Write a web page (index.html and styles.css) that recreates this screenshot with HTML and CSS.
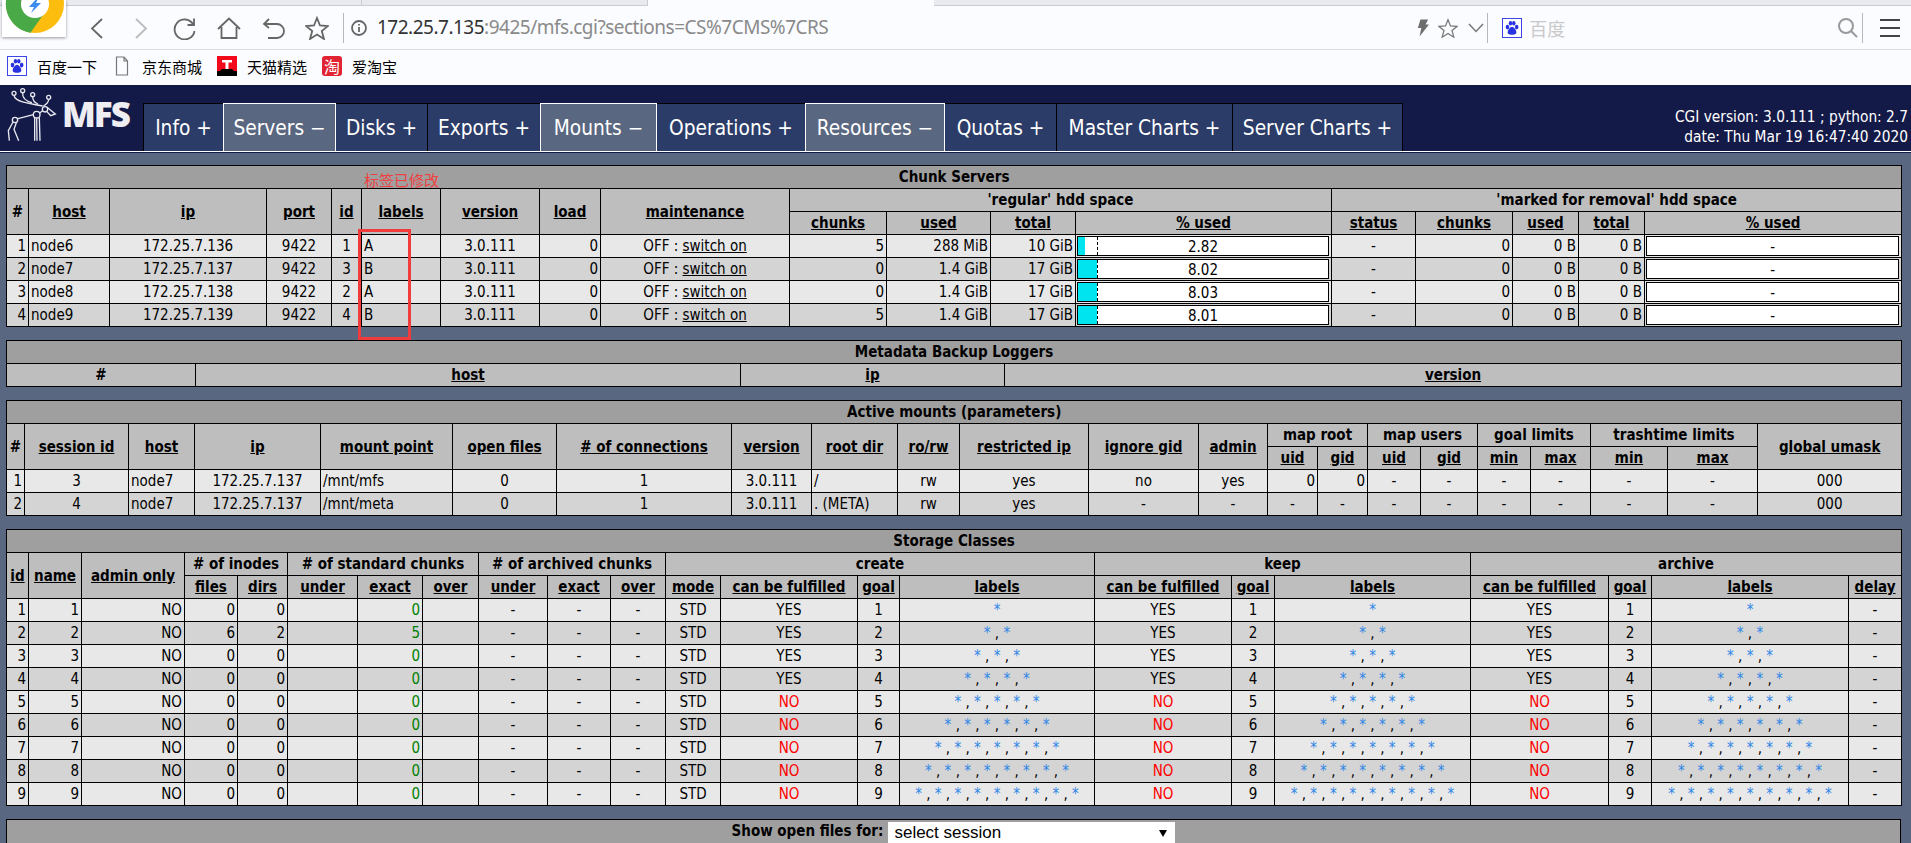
FILE: index.html
```html
<!DOCTYPE html>
<html lang="en">
<head>
<meta charset="utf-8">
<title>MFS</title>
<link rel="stylesheet" href="styles.css">
</head>
<body>
<div class="browser">
  <div class="tabstrip"><div class="tab t-a"></div><div class="tab t-b"></div><div class="tab t-active"></div></div>
  <div class="appicon">
    <svg width="64" height="37" viewBox="0 0 64 37"><circle cx="33" cy="4" r="29" fill="#fdbd0f"/><path d="M33 4 L8 -11 A29 29 0 0 0 28.500 32.700 L41 15 Z" fill="#48a946"/><path d="M14 -6 L33 -4 L24 6 Z" fill="#e53d30"/><circle cx="33" cy="4" r="14" fill="#fff"/><path d="M37 -4 L27 7 L32 7 L29 13 L39 3 L34 3 Z" fill="#3c8bef"/></svg>
  </div>
  <div class="addrbar">
    <div class="navicons">
      <svg class="ic" viewBox="0 0 24 24"><path d="M17 3 L7 12.500 L17 22" class="s"/></svg>
      <svg class="ic" viewBox="0 0 24 24"><path d="M7 3 L17 12.500 L7 22" class="s light"/></svg>
      <svg class="ic" viewBox="0 0 24 24"><path d="M20 8 A10 10 0 1 0 21.500 15 M21 2.500 L21 9 L14.500 9" class="s"/></svg>
      <svg class="ic" viewBox="0 0 24 24"><path d="M1 13 L12 2.500 L23 13 M4.500 11 L4.500 22 L19.500 22 L19.500 11" class="s"/></svg>
      <svg class="ic" viewBox="0 0 24 24"><path d="M8 3 L3 8 L8 12 M3 8 L16 8 A7 7 0 0 1 16 22 L7 22" class="s"/></svg>
      <svg class="ic" viewBox="0 0 24 24"><path d="M12 2 L15 9.500 L23 10 L16.800 15 L19 23 L12 18.500 L5 23 L7.200 15 L1 10 L9 9.500 Z" class="s"/></svg>
    </div>
    <span class="vdiv dv-a"></span>
    <svg class="info" viewBox="0 0 18 18"><circle cx="9" cy="9" r="7" class="s"/><path d="M9 8 L9 13 M9 5 L9 6.500" class="s"/></svg>
    <div class="url"><span class="host-part">172.25.7.135</span>:9425/mfs.cgi?sections=CS%7CMS%7CRS</div>
    <div class="rightgroup">
      <svg class="bolt" viewBox="0 0 14 20"><path d="M4 0 L13 0 L10 6 L14 6 L3 20 L5 10 L1 10 Z" fill="#6e6e6e"/></svg>
      <svg class="star" viewBox="0 0 24 24"><path d="M12 2 L15 9.500 L23 10 L16.800 15 L19 23 L12 18.500 L5 23 L7.200 15 L1 10 L9 9.500 Z" class="s thin"/></svg>
      <svg class="chev" viewBox="0 0 16 10"><path d="M1 1 L8 8.500 L15 1" class="s thin"/></svg>
      <span class="vdiv dv-b"></span>
      <svg class="paw boxed" viewBox="0 0 20 20"><g fill="#2932e1"><ellipse cx="5" cy="9" rx="2" ry="2.600"/><ellipse cx="8.300" cy="4.800" rx="1.900" ry="2.500"/><ellipse cx="12" cy="4.800" rx="1.900" ry="2.500"/><ellipse cx="15.200" cy="9" rx="2" ry="2.600"/><path d="M10 8.500 C7.500 8.500 4 14 5.500 16 C7 18 13 18 14.500 16 C16 14 12.500 8.500 10 8.500 Z"/></g></svg>
      <span class="search-label">百度</span>
      <svg class="mag" viewBox="0 0 20 20"><circle cx="8" cy="8" r="7" class="s lightmag"/><path d="M13 13 L19 19" class="s lightmag"/></svg>
      <span class="vdiv dv-c"></span>
      <div class="burger"><i></i><i></i><i></i></div>
    </div>
  </div>
  <div class="bookmarks">
    <div class="bm"><svg class="bmi boxed" viewBox="0 0 20 20"><g fill="#2932e1"><ellipse cx="5" cy="9" rx="2" ry="2.600"/><ellipse cx="8.300" cy="4.800" rx="1.900" ry="2.500"/><ellipse cx="12" cy="4.800" rx="1.900" ry="2.500"/><ellipse cx="15.200" cy="9" rx="2" ry="2.600"/><path d="M10 8.500 C7.500 8.500 4 14 5.500 16 C7 18 13 18 14.500 16 C16 14 12.500 8.500 10 8.500 Z"/></g></svg>百度一下</div>
    <div class="bm"><svg class="bmi" viewBox="0 0 20 20"><path d="M4.500 1 L12 1 L15.500 5 L15.500 19 L4.500 19 Z M12 1 L12 5 L15.500 5" fill="none" stroke="#777" stroke-width="1.200"/></svg>京东商城</div>
    <div class="bm"><svg class="bmi" viewBox="0 0 20 20"><rect width="20" height="20" fill="#f20a1c"/><path d="M0 15 L3 15 L5 13 L15 13 L17 15 L20 15 L20 20 L0 20 Z" fill="#000"/><path d="M5 4 L15 4 L15 6.500 L11.500 6.500 L11.500 13 L8.500 13 L8.500 6.500 L5 6.500 Z" fill="#fff"/></svg>天猫精选</div>
    <div class="bm"><span class="taobao">淘</span>爱淘宝</div>
  </div>
</div>

<header class="mfs-head">
  <div class="logo">
    <svg class="moose" viewBox="0 3 180 198">
      <g fill="none" stroke="#e8e8ee" stroke-width="4">
        <circle cx="42" cy="28" r="6"/><circle cx="68" cy="20" r="6"/><circle cx="98" cy="32" r="6"/><circle cx="146" cy="40" r="6"/>
        <path d="M42 34 C44 52 80 58 128 66 M68 26 C66 44 80 52 96 56 M98 38 C98 50 104 56 114 60 M146 46 C146 58 138 62 130 66"/>
        <circle cx="135" cy="76" r="8"/><path d="M141 70 L166 90 L152 95 L140 82"/>
        <path d="M128 80 L118 88"/><circle cx="110" cy="92" r="10"/>
        <path d="M100 92 L54 104"/><circle cx="45" cy="108" r="8"/>
        <path d="M104 101 L104 170 M118 101 L120 170 M110 103 L111 170"/>
        <path d="M39 114 L25 140 L28 170 M49 116 L42 136 L56 170"/>
      </g>
    </svg>
    <span class="logotext">MFS</span>
  </div>
  <nav class="tabs">
    <a class="navtab">Info +</a>
    <a class="navtab on">Servers −</a>
    <a class="navtab">Disks +</a>
    <a class="navtab">Exports +</a>
    <a class="navtab on">Mounts −</a>
    <a class="navtab">Operations +</a>
    <a class="navtab on">Resources −</a>
    <a class="navtab">Quotas +</a>
    <a class="navtab">Master Charts +</a>
    <a class="navtab">Server Charts +</a>
  </nav>
  <div class="version">CGI version: 3.0.111 ; python: 2.7<br>date: Thu Mar 19 16:47:40 2020</div>
</header>

<main class="page">
  <table class="t t1">
    <colgroup><col><col><col><col><col><col><col><col><col><col><col><col><col><col><col><col><col><col></colgroup>
    <thead>
      <tr><th class="title" colspan="18">Chunk Servers</th></tr>
      <tr>
        <th rowspan="2">#</th><th rowspan="2"><a>host</a></th><th rowspan="2"><a>ip</a></th><th rowspan="2"><a>port</a></th><th rowspan="2"><a>id</a></th><th rowspan="2"><a>labels</a></th><th rowspan="2"><a>version</a></th><th rowspan="2"><a>load</a></th><th rowspan="2"><a>maintenance</a></th>
        <th colspan="4">'regular' hdd space</th><th colspan="5">'marked for removal' hdd space</th>
      </tr>
      <tr><th><a>chunks</a></th><th><a>used</a></th><th><a>total</a></th><th><a>% used</a></th><th><a>status</a></th><th><a>chunks</a></th><th><a>used</a></th><th><a>total</a></th><th><a>% used</a></th></tr>
    </thead>
    <tbody>
      <tr><td class="r">1</td><td class="l">node6</td><td>172.25.7.136</td><td>9422</td><td>1</td><td class="l">A</td><td>3.0.111</td><td class="r">0</td><td>OFF : <a>switch on</a></td><td class="r">5</td><td class="r">288 MiB</td><td class="r">10 GiB</td><td class="bc"><div class="bar"><i class="fill" style="width:7px"></i><b class="mark"></b><span>2.82</span></div></td><td>-</td><td class="r">0</td><td class="r">0 B</td><td class="r">0 B</td><td class="bc"><div class="bar"><span>-</span></div></td></tr>
      <tr><td class="r">2</td><td class="l">node7</td><td>172.25.7.137</td><td>9422</td><td>3</td><td class="l">B</td><td>3.0.111</td><td class="r">0</td><td>OFF : <a>switch on</a></td><td class="r">0</td><td class="r">1.4 GiB</td><td class="r">17 GiB</td><td class="bc"><div class="bar"><i class="fill" style="width:19px"></i><b class="mark"></b><span>8.02</span></div></td><td>-</td><td class="r">0</td><td class="r">0 B</td><td class="r">0 B</td><td class="bc"><div class="bar"><span>-</span></div></td></tr>
      <tr><td class="r">3</td><td class="l">node8</td><td>172.25.7.138</td><td>9422</td><td>2</td><td class="l">A</td><td>3.0.111</td><td class="r">0</td><td>OFF : <a>switch on</a></td><td class="r">0</td><td class="r">1.4 GiB</td><td class="r">17 GiB</td><td class="bc"><div class="bar"><i class="fill" style="width:19px"></i><b class="mark"></b><span>8.03</span></div></td><td>-</td><td class="r">0</td><td class="r">0 B</td><td class="r">0 B</td><td class="bc"><div class="bar"><span>-</span></div></td></tr>
      <tr><td class="r">4</td><td class="l">node9</td><td>172.25.7.139</td><td>9422</td><td>4</td><td class="l">B</td><td>3.0.111</td><td class="r">0</td><td>OFF : <a>switch on</a></td><td class="r">5</td><td class="r">1.4 GiB</td><td class="r">17 GiB</td><td class="bc"><div class="bar"><i class="fill" style="width:19px"></i><b class="mark"></b><span>8.01</span></div></td><td>-</td><td class="r">0</td><td class="r">0 B</td><td class="r">0 B</td><td class="bc"><div class="bar"><span>-</span></div></td></tr>
    </tbody>
  </table>

  <table class="t t2">
    <colgroup><col><col><col><col></colgroup>
    <thead>
      <tr><th class="title" colspan="4">Metadata Backup Loggers</th></tr>
      <tr><th>#</th><th><a>host</a></th><th><a>ip</a></th><th><a>version</a></th></tr>
    </thead>
  </table>

  <table class="t t3">
    <colgroup><col><col><col><col><col><col><col><col><col><col><col><col><col><col><col><col><col><col><col><col><col><col></colgroup>
    <thead>
      <tr><th class="title" colspan="22">Active mounts (parameters)</th></tr>
      <tr>
        <th rowspan="2">#</th><th rowspan="2"><a>session id</a></th><th rowspan="2"><a>host</a></th><th rowspan="2"><a>ip</a></th><th rowspan="2"><a>mount point</a></th><th rowspan="2"><a>open files</a></th><th rowspan="2"><a># of connections</a></th><th rowspan="2"><a>version</a></th><th rowspan="2"><a>root dir</a></th><th rowspan="2"><a>ro/rw</a></th><th rowspan="2"><a>restricted ip</a></th><th rowspan="2"><a>ignore gid</a></th><th rowspan="2"><a>admin</a></th>
        <th colspan="2">map root</th><th colspan="2">map users</th><th colspan="2">goal limits</th><th colspan="2">trashtime limits</th><th rowspan="2"><a>global umask</a></th>
      </tr>
      <tr><th><a>uid</a></th><th><a>gid</a></th><th><a>uid</a></th><th><a>gid</a></th><th><a>min</a></th><th><a>max</a></th><th><a>min</a></th><th><a>max</a></th></tr>
    </thead>
    <tbody>
      <tr><td class="r">1</td><td>3</td><td class="l">node7</td><td>172.25.7.137</td><td class="l">/mnt/mfs</td><td>0</td><td>1</td><td>3.0.111</td><td class="l">/</td><td>rw</td><td>yes</td><td>no</td><td>yes</td><td class="r">0</td><td class="r">0</td><td>-</td><td>-</td><td>-</td><td>-</td><td>-</td><td>-</td><td>000</td></tr>
      <tr><td class="r">2</td><td>4</td><td class="l">node7</td><td>172.25.7.137</td><td class="l">/mnt/meta</td><td>0</td><td>1</td><td>3.0.111</td><td class="l">. (META)</td><td>rw</td><td>yes</td><td>-</td><td>-</td><td>-</td><td>-</td><td>-</td><td>-</td><td>-</td><td>-</td><td>-</td><td>-</td><td>000</td></tr>
    </tbody>
  </table>

  <table class="t t4">
    <colgroup><col><col><col><col><col><col><col><col><col><col><col><col><col><col><col><col><col><col><col><col><col><col></colgroup>
    <thead>
      <tr><th class="title" colspan="22">Storage Classes</th></tr>
      <tr>
        <th rowspan="2"><a>id</a></th><th rowspan="2"><a>name</a></th><th rowspan="2"><a>admin only</a></th>
        <th colspan="2"># of inodes</th><th colspan="3"># of standard chunks</th><th colspan="3"># of archived chunks</th>
        <th colspan="4">create</th><th colspan="3">keep</th><th colspan="4">archive</th>
      </tr>
      <tr>
        <th><a>files</a></th><th><a>dirs</a></th><th><a>under</a></th><th><a>exact</a></th><th><a>over</a></th><th><a>under</a></th><th><a>exact</a></th><th><a>over</a></th>
        <th><a>mode</a></th><th><a>can be fulfilled</a></th><th><a>goal</a></th><th><a>labels</a></th>
        <th><a>can be fulfilled</a></th><th><a>goal</a></th><th><a>labels</a></th>
        <th><a>can be fulfilled</a></th><th><a>goal</a></th><th><a>labels</a></th><th><a>delay</a></th>
      </tr>
    </thead>
    <tbody>
      <tr><td class="r">1</td><td class="r">1</td><td class="r">NO</td><td class="r">0</td><td class="r">0</td><td></td><td class="r ok">0</td><td></td><td>-</td><td>-</td><td>-</td><td>STD</td><td>YES</td><td>1</td><td class="lb"><u>*</u></td><td>YES</td><td>1</td><td class="lb"><u>*</u></td><td>YES</td><td>1</td><td class="lb"><u>*</u></td><td>-</td></tr>
      <tr><td class="r">2</td><td class="r">2</td><td class="r">NO</td><td class="r">6</td><td class="r">2</td><td></td><td class="r ok">5</td><td></td><td>-</td><td>-</td><td>-</td><td>STD</td><td>YES</td><td>2</td><td class="lb"><u>*</u> , <u>*</u></td><td>YES</td><td>2</td><td class="lb"><u>*</u> , <u>*</u></td><td>YES</td><td>2</td><td class="lb"><u>*</u> , <u>*</u></td><td>-</td></tr>
      <tr><td class="r">3</td><td class="r">3</td><td class="r">NO</td><td class="r">0</td><td class="r">0</td><td></td><td class="r ok">0</td><td></td><td>-</td><td>-</td><td>-</td><td>STD</td><td>YES</td><td>3</td><td class="lb"><u>*</u> , <u>*</u> , <u>*</u></td><td>YES</td><td>3</td><td class="lb"><u>*</u> , <u>*</u> , <u>*</u></td><td>YES</td><td>3</td><td class="lb"><u>*</u> , <u>*</u> , <u>*</u></td><td>-</td></tr>
      <tr><td class="r">4</td><td class="r">4</td><td class="r">NO</td><td class="r">0</td><td class="r">0</td><td></td><td class="r ok">0</td><td></td><td>-</td><td>-</td><td>-</td><td>STD</td><td>YES</td><td>4</td><td class="lb"><u>*</u> , <u>*</u> , <u>*</u> , <u>*</u></td><td>YES</td><td>4</td><td class="lb"><u>*</u> , <u>*</u> , <u>*</u> , <u>*</u></td><td>YES</td><td>4</td><td class="lb"><u>*</u> , <u>*</u> , <u>*</u> , <u>*</u></td><td>-</td></tr>
      <tr><td class="r">5</td><td class="r">5</td><td class="r">NO</td><td class="r">0</td><td class="r">0</td><td></td><td class="r ok">0</td><td></td><td>-</td><td>-</td><td>-</td><td>STD</td><td class="no">NO</td><td>5</td><td class="lb"><u>*</u> , <u>*</u> , <u>*</u> , <u>*</u> , <u>*</u></td><td class="no">NO</td><td>5</td><td class="lb"><u>*</u> , <u>*</u> , <u>*</u> , <u>*</u> , <u>*</u></td><td class="no">NO</td><td>5</td><td class="lb"><u>*</u> , <u>*</u> , <u>*</u> , <u>*</u> , <u>*</u></td><td>-</td></tr>
      <tr><td class="r">6</td><td class="r">6</td><td class="r">NO</td><td class="r">0</td><td class="r">0</td><td></td><td class="r ok">0</td><td></td><td>-</td><td>-</td><td>-</td><td>STD</td><td class="no">NO</td><td>6</td><td class="lb"><u>*</u> , <u>*</u> , <u>*</u> , <u>*</u> , <u>*</u> , <u>*</u></td><td class="no">NO</td><td>6</td><td class="lb"><u>*</u> , <u>*</u> , <u>*</u> , <u>*</u> , <u>*</u> , <u>*</u></td><td class="no">NO</td><td>6</td><td class="lb"><u>*</u> , <u>*</u> , <u>*</u> , <u>*</u> , <u>*</u> , <u>*</u></td><td>-</td></tr>
      <tr><td class="r">7</td><td class="r">7</td><td class="r">NO</td><td class="r">0</td><td class="r">0</td><td></td><td class="r ok">0</td><td></td><td>-</td><td>-</td><td>-</td><td>STD</td><td class="no">NO</td><td>7</td><td class="lb"><u>*</u> , <u>*</u> , <u>*</u> , <u>*</u> , <u>*</u> , <u>*</u> , <u>*</u></td><td class="no">NO</td><td>7</td><td class="lb"><u>*</u> , <u>*</u> , <u>*</u> , <u>*</u> , <u>*</u> , <u>*</u> , <u>*</u></td><td class="no">NO</td><td>7</td><td class="lb"><u>*</u> , <u>*</u> , <u>*</u> , <u>*</u> , <u>*</u> , <u>*</u> , <u>*</u></td><td>-</td></tr>
      <tr><td class="r">8</td><td class="r">8</td><td class="r">NO</td><td class="r">0</td><td class="r">0</td><td></td><td class="r ok">0</td><td></td><td>-</td><td>-</td><td>-</td><td>STD</td><td class="no">NO</td><td>8</td><td class="lb"><u>*</u> , <u>*</u> , <u>*</u> , <u>*</u> , <u>*</u> , <u>*</u> , <u>*</u> , <u>*</u></td><td class="no">NO</td><td>8</td><td class="lb"><u>*</u> , <u>*</u> , <u>*</u> , <u>*</u> , <u>*</u> , <u>*</u> , <u>*</u> , <u>*</u></td><td class="no">NO</td><td>8</td><td class="lb"><u>*</u> , <u>*</u> , <u>*</u> , <u>*</u> , <u>*</u> , <u>*</u> , <u>*</u> , <u>*</u></td><td>-</td></tr>
      <tr><td class="r">9</td><td class="r">9</td><td class="r">NO</td><td class="r">0</td><td class="r">0</td><td></td><td class="r ok">0</td><td></td><td>-</td><td>-</td><td>-</td><td>STD</td><td class="no">NO</td><td>9</td><td class="lb"><u>*</u> , <u>*</u> , <u>*</u> , <u>*</u> , <u>*</u> , <u>*</u> , <u>*</u> , <u>*</u> , <u>*</u></td><td class="no">NO</td><td>9</td><td class="lb"><u>*</u> , <u>*</u> , <u>*</u> , <u>*</u> , <u>*</u> , <u>*</u> , <u>*</u> , <u>*</u> , <u>*</u></td><td class="no">NO</td><td>9</td><td class="lb"><u>*</u> , <u>*</u> , <u>*</u> , <u>*</u> , <u>*</u> , <u>*</u> , <u>*</u> , <u>*</u> , <u>*</u></td><td>-</td></tr>
    </tbody>
  </table>

  <table class="t t5">
    <thead><tr><th class="title openfiles"><div class="of-wrap"><span>Show open files for:</span><span class="selwrap"><select class="sel"><option>select session</option></select><svg class="selarrow" viewBox="0 0 8 8"><path d="M0 1 L8 1 L4 8 Z" fill="#000"/></svg></span></div></th></tr></thead>
  </table>

  <div class="note-text">标签已修改</div>
  <div class="note-box"></div>
</main>
</body>
</html>
```

FILE: styles.css
```css
html, body {
  margin: 0;
  height: 843px;
  overflow: hidden;
}
body {
  background: #5a6780;
  font-family: "DejaVu Sans Condensed", "DejaVu Sans", "Noto Sans CJK SC", sans-serif;
  font-size: 15px;
  color: #000;
}

/* browser chrome */
.browser { position: relative; background: #fbfcff; }
.tabstrip {
  display: flex;
  height: 5px;
  background: #e8eaef;
  border-bottom: 1px solid #c9ccd2;
}
.tab { height: 5px; }
.t-a { width: 362px; border-right: 1px solid #c9ccd2; box-sizing: border-box; }
.t-b { width: 286px; border-right: 1px solid #c9ccd2; box-sizing: border-box; }
.t-active { width: 286px; background: #fbfcff; height: 6px; }
.appicon {
  position: absolute;
  left: 2px;
  top: 0;
  width: 64px;
  height: 37px;
  background: #fff;
  box-shadow: 0 1px 3px rgba(0,0,0,.4);
}
.appicon svg { display: block; }
.addrbar {
  display: flex;
  align-items: center;
  height: 43px;
  border-bottom: 1px solid #dcdde0;
  padding-left: 85px;
  padding-right: 11px;
}
.navicons { display: flex; gap: 20px; }
.ic { width: 24px; height: 24px; display: block; }
.s { fill: none; stroke: #666; stroke-width: 1.800; }
.s.light { stroke: #bbb; }
.s.thin { stroke-width: 1.500; stroke: #777; }
.s.lightmag { stroke: #999; stroke-width: 2; }
.vdiv { display: block; width: 1px; height: 30px; background: #b8b8b8; }
.dv-a { margin-left: 14px; }
.info { width: 18px; height: 18px; margin-left: 6px; }
.url {
  margin-left: 9px;
  font-family: "Noto Sans", sans-serif;
  font-size: 19px;
  color: #8a8a8a;
  white-space: nowrap;
  letter-spacing: -0.500px;
  position: relative;
  top: -1px;
}
.host-part { color: #333; }
.rightgroup {
  margin-left: 589px;
  flex: 1;
  display: flex;
  align-items: center;
}
.bolt { width: 12px; height: 18px; }
.star { width: 20px; height: 20px; margin-left: 9px; }
.chev { width: 16px; height: 10px; margin-left: 10px; }
.dv-b { margin-left: 3px; }
.boxed { border: 1px solid #3a44e8; box-sizing: border-box; background: #fff; }
.paw { width: 20px; height: 20px; margin-left: 14px; }
.search-label { margin-left: 7px; color: #c8c8c8; font: 18px "Noto Sans CJK SC", sans-serif; }
.mag { width: 20px; height: 20px; margin-left: auto; }
.dv-c { margin-left: 4px; }
.burger { margin-left: 17px; width: 20px; display: flex; flex-direction: column; gap: 6px; }
.burger i { display: block; height: 2px; background: #444; }

.bookmarks {
  display: flex;
  align-items: center;
  gap: 15px;
  height: 32px;
  padding: 0 0 3px 7px;
  font: 15px "Noto Sans CJK SC", sans-serif;
}
.bm { display: flex; align-items: center; gap: 10px; }
.bmi { width: 20px; height: 20px; display: block; }
.taobao {
  display: block;
  width: 20px;
  height: 20px;
  background: #e02433;
  border-radius: 3px;
  color: #fff;
  font-size: 16px;
  line-height: 20px;
  text-align: center;
}

/* MFS header */
.mfs-head {
  display: flex;
  align-items: flex-end;
  height: 66px;
  background: #141a48;
  border-bottom: 1px solid #fff;
}
.logo { width: 143px; height: 66px; display: flex; align-items: flex-start; flex: none; }
.moose { width: 60px; height: 66px; flex: none; }
.logotext {
  margin: 11px 0 0 2px;
  font: 800 35px/36px "Open Sans", sans-serif;
  color: #eeeef2;
  letter-spacing: -2px;
}
.tabs {
  display: grid;
  grid-template-columns: 80px 112px 92px 113px 116px 149px 139px 112px 176px 170px;
  height: 48px;
  flex: none;
}
.navtab {
  box-sizing: border-box;
  height: 48px;
  background: #2b3c68;
  border: 1px solid #000;
  border-bottom: 0;
  margin-right: -1px;
  color: #fff;
  font-size: 20.700px;
  line-height: 48px;
  text-align: center;
  white-space: nowrap;
}
.navtab.on {
  background: #5a6780;
  border-color: #fff;
  position: relative;
}
.version {
  margin: 0 3px 4px auto;
  color: #fff;
  text-align: right;
  font-size: 15.300px;
  line-height: 20px;
  white-space: nowrap;
}

/* page */
.page {
  position: relative;
  border-top: 1px solid #141a48;
  padding: 12px 0 0 6px;
}
.t {
  border-collapse: collapse;
  table-layout: fixed;
  width: 1895px;
  margin-bottom: 13px;
}
.t th, .t td {
  border: 1px solid #000;
  height: 22px;
  padding: 0 2px;
  line-height: 22px;
  text-align: center;
  white-space: nowrap;
  overflow: hidden;
  box-sizing: content-box;
}
.t th { background: #bebebe; font-weight: bold; }
.t th.title { background: #9f9f9f; }
.t th a, .t td a { text-decoration: underline; }
.t tbody tr:nth-child(odd) td { background: #e8e8e8; }
.t tbody tr:nth-child(even) td { background: #d4d4d4; }
.t td.r { text-align: right; }
.t td.l { text-align: left; }
.t td.ok { color: #008000; }
.t td.no { color: #ff0000; }
.t td.lb u { color: #2f86e6; text-decoration: none; }

.t td.bc { padding: 0 2px 0 1px; }
.bar {
  position: relative;
  box-sizing: border-box;
  height: 20px;
  background: #fff;
  border: 1px solid #000;
  line-height: 21px;
}
.fill { position: absolute; left: 0; top: 0; bottom: 0; background: #00e4f0; }
.mark { position: absolute; left: 19px; top: 0; bottom: 0; border-left: 1px dashed #000; }
.bar span { position: relative; display: block; text-align: center; }

.t1 col:nth-child(1){width:22px}.t1 col:nth-child(2){width:81px}.t1 col:nth-child(3){width:157px}.t1 col:nth-child(4){width:65px}.t1 col:nth-child(5){width:30px}.t1 col:nth-child(6){width:79px}.t1 col:nth-child(7){width:99px}.t1 col:nth-child(8){width:61px}.t1 col:nth-child(9){width:189px}.t1 col:nth-child(10){width:97px}.t1 col:nth-child(11){width:104px}.t1 col:nth-child(12){width:85px}.t1 col:nth-child(13){width:256px}.t1 col:nth-child(14){width:84px}.t1 col:nth-child(15){width:97px}.t1 col:nth-child(16){width:66px}.t1 col:nth-child(17){width:66px}.t1 col:nth-child(18){width:257px}

.t2 col:nth-child(1){width:189px}.t2 col:nth-child(2){width:545px}.t2 col:nth-child(3){width:264px}.t2 col:nth-child(4){width:897px}

.t3 col:nth-child(1){width:18px}.t3 col:nth-child(2){width:104px}.t3 col:nth-child(3){width:66px}.t3 col:nth-child(4){width:126px}.t3 col:nth-child(5){width:132px}.t3 col:nth-child(6){width:104px}.t3 col:nth-child(7){width:175px}.t3 col:nth-child(8){width:80px}.t3 col:nth-child(9){width:86px}.t3 col:nth-child(10){width:62px}.t3 col:nth-child(11){width:129px}.t3 col:nth-child(12){width:110px}.t3 col:nth-child(13){width:69px}.t3 col:nth-child(14){width:50px}.t3 col:nth-child(15){width:50px}.t3 col:nth-child(16){width:53px}.t3 col:nth-child(17){width:57px}.t3 col:nth-child(18){width:53px}.t3 col:nth-child(19){width:60px}.t3 col:nth-child(20){width:77px}.t3 col:nth-child(21){width:90px}.t3 col:nth-child(22){width:144px}

.t4 col:nth-child(1){width:22px}.t4 col:nth-child(2){width:53px}.t4 col:nth-child(3){width:103px}.t4 col:nth-child(4){width:53px}.t4 col:nth-child(5){width:50px}.t4 col:nth-child(6){width:70px}.t4 col:nth-child(7){width:65px}.t4 col:nth-child(8){width:56px}.t4 col:nth-child(9){width:69px}.t4 col:nth-child(10){width:63px}.t4 col:nth-child(11){width:55px}.t4 col:nth-child(12){width:55px}.t4 col:nth-child(13){width:137px}.t4 col:nth-child(14){width:42px}.t4 col:nth-child(15){width:195px}.t4 col:nth-child(16){width:137px}.t4 col:nth-child(17){width:43px}.t4 col:nth-child(18){width:196px}.t4 col:nth-child(19){width:138px}.t4 col:nth-child(20){width:43px}.t4 col:nth-child(21){width:197px}.t4 col:nth-child(22){width:53px}

.t .openfiles { height: 30px; vertical-align: top; padding-top: 0; line-height: 22px; }
.of-wrap { display: flex; justify-content: center; align-items: flex-start; gap: 5px; }
.selwrap { position: relative; display: block; width: 287px; height: 23px; margin-top: 2px; }
.sel {
  appearance: none;
  display: block;
  box-sizing: border-box;
  width: 100%;
  height: 23px;
  border: 0;
  border-radius: 0;
  background: #fff;
  padding: 0 0 3px 6px;
  font: 17px "Liberation Sans", sans-serif;
  color: #000;
}
.selarrow { position: absolute; right: 8px; top: 7px; width: 8px; height: 8px; }

/* red annotation over the page */
.note-text {
  position: absolute;
  left: 364px;
  top: 18px;
  color: #f04040;
  font: 15px/18px "Noto Sans CJK SC", sans-serif;
}
.note-box {
  position: absolute;
  left: 358px;
  top: 76px;
  width: 47px;
  height: 105px;
  border: 3px solid #f03c3c;
}
```
